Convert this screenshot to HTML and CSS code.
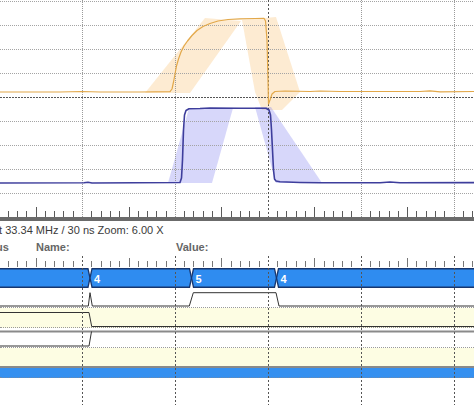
FILE: index.html
```html
<!DOCTYPE html>
<html>
<head>
<meta charset="utf-8">
<link rel="stylesheet" href="styles.css">
</head>
<body>
<div class="screen">
  <svg class="scope" width="474" height="222" viewBox="0 0 474 222">
    <g class="shade-orange">
      <polygon points="145,93 190,93 241,21 205,18"/>
      <polygon points="242,20 276,17 300,92 282,110 262,110 255,92"/>
    </g>
    <g class="shade-blue">
      <polygon points="168,183 212,183 233,108 189,108"/>
      <polygon points="255,107 271,107 322,183 276,183"/>
    </g>
    <path class="grid-h" d="M0,1.5H474M0,25.5H474M0,49.5H474M0,73.5H474M0,121.5H474M0,145.5H474M0,169.5H474M0,193.5H474"/>
    <path class="grid-center" d="M0,97.5H474"/>
    <path class="grid-v" d="M82.5,0V217M175.5,0V217M361.5,0V217M454.5,0V217"/>
    <path class="grid-trig" d="M268.5,0V217"/>
    <path class="trace-orange" d="M0,92 L60,92 L82,91.5 L100,92 L140,92 L170,91.6 L172,89 L173.5,82 L175,74 L176.5,66 L178.5,59 L181,52 L184,46 L187.5,41 L192,35.5 L197,30.5 L203,26.5 L210,23.5 L218,21 L228,19.5 L240,18.8 L255,18.5 L264,18.3 L265.5,21 L267,40 L268,80 L268.5,104 L270,100 L272,94 L275,91.5 L285,91 L310,91.5 L320,91 L340,91.5 L360,91.5 L420,91.5 L430,90.8 L440,91.8 L474,91.5"/>
    <path class="trace-blue" d="M0,183 L84,182.8 L88,182.2 L92,183 L180,182.5 L181.5,178 L182.5,160 L183.5,130 L184.5,115 L186,110.5 L189,108.8 L200,108.5 L210,108 L240,108.2 L266,108.3 L269,110 L270.5,115 L271.5,130 L272.5,150 L273.5,170 L274.5,179 L276,181 L280,181.8 L300,182.5 L320,182.8 L380,182.7 L390,182 L400,182.8 L474,182.6"/>
    <path class="tick" d="M8.5,211V217M17.5,211V217M26.5,211V217M45.5,211V217M54.5,211V217M63.5,211V217M73.5,211V217M91.5,211V217M101.5,211V217M110.5,211V217M119.5,211V217M138.5,211V217M147.5,211V217M156.5,211V217M166.5,211V217M184.5,211V217M193.5,211V217M203.5,211V217M212.5,211V217M231.5,211V217M240.5,211V217M249.5,211V217M259.5,211V217M277.5,211V217M286.5,211V217M296.5,211V217M305.5,211V217M324.5,211V217M333.5,211V217M342.5,211V217M351.5,211V217M370.5,211V217M379.5,211V217M389.5,211V217M398.5,211V217M416.5,211V217M426.5,211V217M435.5,211V217M444.5,211V217M463.5,211V217M472.5,211V217"/>
    <path class="tick" d="M36.5,207V217M129.5,207V217M221.5,207V217M314.5,207V217M407.5,207V217"/>
    <rect class="ruler-bar" x="0" y="217" width="474" height="4"/>
  </svg>

  <div class="status">at 33.34 MHz / 30 ns Zoom: 6.00 X</div>

  <div class="cols">
    <span class="c-bus">Bus</span>
    <span class="c-name">Name:</span>
    <span class="c-value">Value:</span>
  </div>

  <div class="wave">
    <svg class="ruler" width="474" height="14" viewBox="0 0 474 14">
      <path class="tick-l" d="M8.5,7V13M17.5,7V13M26.5,7V13M45.5,7V13M54.5,7V13M63.5,7V13M73.5,7V13M91.5,7V13M101.5,7V13M110.5,7V13M119.5,7V13M138.5,7V13M147.5,7V13M156.5,7V13M166.5,7V13M184.5,7V13M193.5,7V13M203.5,7V13M212.5,7V13M231.5,7V13M240.5,7V13M249.5,7V13M259.5,7V13M277.5,7V13M286.5,7V13M296.5,7V13M305.5,7V13M324.5,7V13M333.5,7V13M342.5,7V13M351.5,7V13M370.5,7V13M379.5,7V13M389.5,7V13M398.5,7V13M416.5,7V13M426.5,7V13M435.5,7V13M444.5,7V13M463.5,7V13M472.5,7V13"/>
      <path class="tick-l" d="M36.5,4V13M129.5,4V13M221.5,4V13M314.5,4V13M407.5,4V13"/>
    </svg>

    <div class="row bus-row">
      <svg width="474" height="20" viewBox="0 0 474 20">
        <polygon class="bus" points="-10,0.75 88,0.75 90,10 88,19.25 -10,19.25"/>
        <polygon class="bus" points="92,0.75 189.5,0.75 191.5,10 189.5,19.25 92,19.25 90,10"/>
        <polygon class="bus" points="193.5,0.75 274.5,0.75 276.5,10 274.5,19.25 193.5,19.25 191.5,10"/>
        <polygon class="bus" points="278.5,0.75 490,0.75 490,19.25 278.5,19.25 276.5,10"/>
        <text class="bus-val" x="94" y="14.5">4</text>
        <text class="bus-val" x="195.5" y="14.5">5</text>
        <text class="bus-val" x="280.5" y="14.5">4</text>
      </svg>
    </div>

    <div class="row row-a">
      <svg width="474" height="19" viewBox="0 0 474 19">
        <path class="sig" d="M0,18 H88.3 L90,4.7 L92.3,18 H189.3 L193.3,4.7 H276 L279,18 H474"/>
      </svg>
    </div>

    <div class="row row-b">
      <svg width="474" height="19" viewBox="0 0 474 19">
        <path class="sig" d="M0,4.5 H89 L91.7,18.5 H474"/>
      </svg>
    </div>

    <div class="row row-c">
      <svg width="474" height="19" viewBox="0 0 474 19">
        <path class="sep" d="M0,3.5 H474"/>
        <path class="sig" d="M0,18 H89 L91.5,3.5"/>
      </svg>
    </div>

    <div class="row row-d"></div>
    <div class="row row-e"></div>

    <svg class="cursors" width="474" height="151" viewBox="0 0 474 151">
      <path d="M82.5,2V151M175.5,2V151M268.5,2V151M361.5,2V151M454.5,2V151"/>
    </svg>
  </div>
</div>
</body>
</html>
```

FILE: styles.css
```css
html, body {
  margin: 0;
  padding: 0;
  background: #ffffff;
}

body {
  width: 474px;
  height: 405px;
  overflow: hidden;
  font-family: "Liberation Sans", Arial, sans-serif;
}

.screen {
  display: flex;
  flex-direction: column;
  width: 474px;
}

.scope {
  display: block;
  width: 474px;
  height: 222px;
}

.shade-orange polygon {
  fill: rgba(248, 188, 105, 0.3);
}

.shade-blue polygon {
  fill: rgba(122, 122, 238, 0.3);
}

.grid-h {
  stroke: #a4a4a4;
  stroke-width: 1;
  stroke-dasharray: 1 1;
  fill: none;
}

.grid-center {
  stroke: #555555;
  stroke-width: 1;
  stroke-dasharray: 2 1;
  fill: none;
}

.grid-v {
  stroke: #9a9a9a;
  stroke-width: 1;
  stroke-dasharray: 1 1;
  fill: none;
}

.grid-trig {
  stroke: #555555;
  stroke-width: 1;
  stroke-dasharray: 2 2;
  fill: none;
}

.trace-orange {
  fill: none;
  stroke: #e2a84a;
  stroke-width: 1.2;
  stroke-linejoin: round;
}

.trace-blue {
  fill: none;
  stroke: #3e3e9c;
  stroke-width: 1.6;
  stroke-linejoin: round;
}

.tick {
  stroke: #5a5a5a;
  stroke-width: 1;
}

.ruler-bar {
  fill: #6b6b6b;
}

.status {
  height: 13px;
  padding-top: 2px;
  margin-left: -7px;
  font-size: 11px;
  line-height: 13px;
  color: #3a3a3a;
  white-space: nowrap;
}

.cols {
  display: flex;
  height: 13px;
  padding-top: 4px;
  font-size: 11px;
  line-height: 13px;
  font-weight: bold;
  color: #666666;
  white-space: nowrap;
}

.c-bus {
  width: 48px;
  margin-left: -12px;
  flex: none;
}

.c-name {
  width: 140px;
  flex: none;
}

.wave {
  position: relative;
  height: 151px;
}

.ruler {
  display: block;
}

.tick-l {
  stroke: #777777;
  stroke-width: 1;
}

.row {
  box-sizing: border-box;
  height: 20px;
}

.row svg {
  display: block;
}

.bus-row {
  background: #ffffff;
}

.bus {
  fill: #2f8cf0;
  stroke: #17366e;
  stroke-width: 1.3;
}

.bus-val {
  fill: #ffffff;
  font-family: "Liberation Sans", Arial, sans-serif;
  font-size: 11px;
  font-weight: bold;
}

.sig {
  fill: none;
  stroke: #333333;
  stroke-width: 1;
}

.sep {
  fill: none;
  stroke: #8a8a8a;
  stroke-width: 2;
}

.row-a {
  border-bottom: 1px dotted #9a9a9a;
}

.row-b {
  background: #fdfde3;
  border-bottom: 1px dotted #9a9a9a;
}

.row-c {
  border-bottom: 1px dotted #9a9a9a;
}

.row-d {
  background: #fdfde3;
  border-bottom: 2px solid #8a8a8a;
}

.row-e {
  height: 10px;
  background: #3590f0;
  border-bottom: 1px dotted #6a8ab0;
}

.cursors {
  position: absolute;
  left: 0;
  top: 0;
  pointer-events: none;
}

.cursors path {
  stroke: #555555;
  stroke-width: 1;
  stroke-dasharray: 2 2;
  fill: none;
}
```
